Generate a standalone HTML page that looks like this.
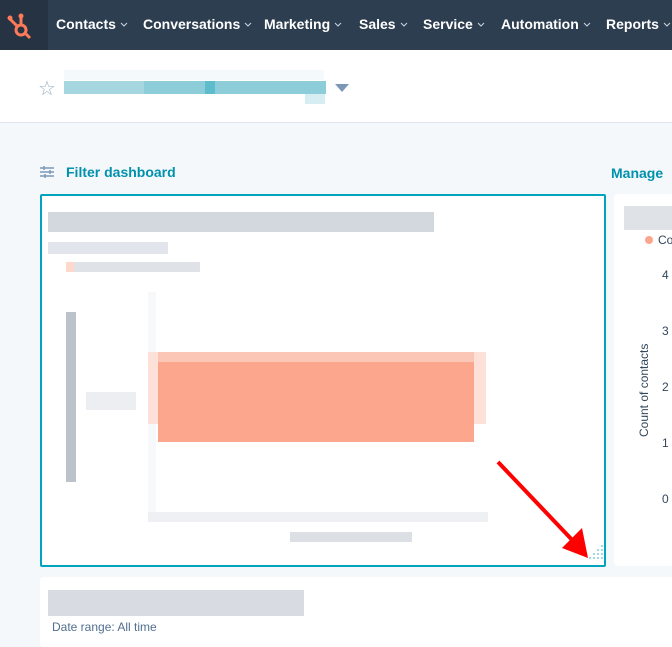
<!DOCTYPE html>
<html><head><meta charset="utf-8"><style>
*{margin:0;padding:0;box-sizing:border-box}
body{width:672px;height:641px;overflow:hidden;background:#f5f8fa;font-family:"Liberation Sans",sans-serif;position:relative}
.nav{position:absolute;left:0;top:0;width:672px;height:50px;background:#2d3e50}
.logo{position:absolute;left:0;top:0;width:48px;height:50px;background:#253342}
.nav span{position:absolute;top:16px;color:#fff;font-weight:bold;font-size:14px;white-space:nowrap}
.nav span svg{margin-left:4px;vertical-align:2px}
.hdr{position:absolute;left:0;top:50px;width:672px;height:73px;background:#fff;border-bottom:1px solid #dfe3eb}
.b{position:absolute}
.card{position:absolute;background:#fff}
</style></head><body>
<div class="nav">
<div class="logo"><svg width="48" height="50" viewBox="0 0 48 50"><g fill="none" stroke="#ff7a59" stroke-width="3"><circle cx="21" cy="30" r="5"/><line x1="21" y1="25" x2="21" y2="17"/><line x1="17" y1="26" x2="10" y2="19"/><line x1="26" y1="34" x2="30" y2="38"/></g><circle cx="21" cy="16" r="2.5" fill="#ff7a59"/><circle cx="10" cy="18" r="2.5" fill="#ff7a59"/></svg></div>
<span style="left:56px">Contacts<svg width="8" height="5"><path d="M1 1l3 3 3-3" fill="none" stroke="#cbd6e2"/></svg></span>
<span style="left:143px">Conversations<svg width="8" height="5"><path d="M1 1l3 3 3-3" fill="none" stroke="#cbd6e2"/></svg></span>
<span style="left:264px">Marketing<svg width="8" height="5"><path d="M1 1l3 3 3-3" fill="none" stroke="#cbd6e2"/></svg></span>
<span style="left:359px">Sales<svg width="8" height="5"><path d="M1 1l3 3 3-3" fill="none" stroke="#cbd6e2"/></svg></span>
<span style="left:423px">Service<svg width="8" height="5"><path d="M1 1l3 3 3-3" fill="none" stroke="#cbd6e2"/></svg></span>
<span style="left:501px">Automation<svg width="8" height="5"><path d="M1 1l3 3 3-3" fill="none" stroke="#cbd6e2"/></svg></span>
<span style="left:606px">Reports<svg width="8" height="5"><path d="M1 1l3 3 3-3" fill="none" stroke="#cbd6e2"/></svg></span>
</div>
<div class="hdr">
<div class="b" style="left:38px;top:26px;color:#99afc4;font-size:20px">☆</div>
<div class="b" style="left:64px;top:20px;width:260px;height:10px;background:#f4fafb"></div>
<div class="b" style="left:64px;top:31px;width:262px;height:13px;background:#8dcdd9"></div>
<div class="b" style="left:64px;top:31px;width:80px;height:13px;background:#a6d7e0"></div>
<div class="b" style="left:205px;top:31px;width:10px;height:13px;background:#5fbccc"></div>
<div class="b" style="left:305px;top:44px;width:20px;height:10px;background:#d6eef2"></div>
<div class="b" style="left:335px;top:34px;width:0;height:0;border-left:7px solid transparent;border-right:7px solid transparent;border-top:8px solid #7c98b6"></div>
</div>
<svg class="b" style="left:40px;top:165px" width="14" height="14" viewBox="0 0 14 14" stroke="#7c98b6" stroke-width="1.5"><line x1="0" y1="3" x2="14" y2="3"/><line x1="0" y1="7" x2="14" y2="7"/><line x1="0" y1="11" x2="14" y2="11"/><line x1="4" y1="1" x2="4" y2="5"/><line x1="10" y1="5" x2="10" y2="9"/><line x1="5" y1="9" x2="5" y2="13"/></svg>
<div class="b" style="left:66px;top:164px;color:#0091ae;font-weight:bold;font-size:14px">Filter dashboard</div>
<div class="b" style="left:611px;top:165px;color:#0091ae;font-weight:bold;font-size:14px">Manage</div>
<div class="card" style="left:40px;top:194px;width:566px;height:373px;border:2px solid #00a4bd;border-radius:2px">
<div class="b" style="left:6px;top:16px;width:386px;height:20px;background:#d3d8df"></div>
<div class="b" style="left:6px;top:46px;width:120px;height:12px;background:#e2e6ec"></div>
<div class="b" style="left:24px;top:66px;width:8px;height:10px;background:#fdd8cc"></div>
<div class="b" style="left:32px;top:66px;width:126px;height:10px;background:#dfe2e7"></div>
<div class="b" style="left:24px;top:116px;width:10px;height:170px;background:#bcc2ca"></div>
<div class="b" style="left:44px;top:196px;width:50px;height:18px;background:#eceef1"></div>
<div class="b" style="left:106px;top:96px;width:8px;height:230px;background:#f7f8fa"></div>
<div class="b" style="left:106px;top:156px;width:338px;height:72px;background:#fde0d8"></div>
<div class="b" style="left:116px;top:156px;width:316px;height:10px;background:#fcc6b6"></div>
<div class="b" style="left:116px;top:166px;width:316px;height:80px;background:#fca68d"></div>
<div class="b" style="left:106px;top:316px;width:340px;height:10px;background:#eef0f3"></div>
<div class="b" style="left:248px;top:336px;width:122px;height:10px;background:#dcdfe4"></div>
<svg class="b" style="left:440px;top:254px" width="124" height="116"><line x1="16" y1="12" x2="94" y2="94" stroke="#f00" stroke-width="4"/><polygon points="106,108 80,98 100,78" fill="#f00"/><g fill="#7fd0dd"><circle cx="120" cy="96" r="1"/><circle cx="120" cy="100" r="1"/><circle cx="116" cy="100" r="1"/><circle cx="120" cy="104" r="1"/><circle cx="116" cy="104" r="1"/><circle cx="112" cy="104" r="1"/><circle cx="120" cy="108" r="1"/><circle cx="116" cy="108" r="1"/><circle cx="112" cy="108" r="1"/><circle cx="108" cy="108" r="1"/></g></svg>
</div>
<div class="card" style="left:614px;top:194px;width:60px;height:372px;border-radius:4px">
<div class="b" style="left:10px;top:12px;width:50px;height:24px;background:#dfe2e7"></div>
<div class="b" style="left:31px;top:42px;width:8px;height:8px;border-radius:50%;background:#fca68d"></div>
<div class="b" style="left:44px;top:39px;font-size:12px;color:#33475b">Co</div>
<div class="b" style="left:48px;top:74px;font-size:12px;color:#33475b">4</div>
<div class="b" style="left:48px;top:130px;font-size:12px;color:#33475b">3</div>
<div class="b" style="left:48px;top:186px;font-size:12px;color:#33475b">2</div>
<div class="b" style="left:48px;top:242px;font-size:12px;color:#33475b">1</div>
<div class="b" style="left:48px;top:298px;font-size:12px;color:#33475b">0</div>
<div class="b" style="left:-20px;top:186px;width:100px;font-size:12px;color:#33475b;transform:rotate(-90deg);white-space:nowrap">Count of contacts</div>
</div>
<div class="card" style="left:40px;top:577px;width:640px;height:70px;border-radius:4px">
<div class="b" style="left:8px;top:13px;width:256px;height:26px;background:#d8dce2"></div>
<div class="b" style="left:12px;top:43px;font-size:12px;color:#516f90">Date range: All time</div>
</div>
</body></html>
